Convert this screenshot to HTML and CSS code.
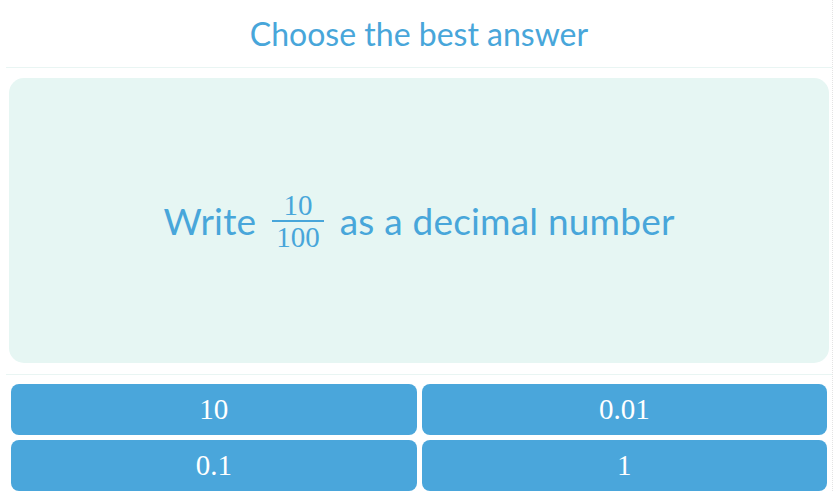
FILE: index.html
```html
<!DOCTYPE html>
<html lang="en">
<head>
    <meta charset="UTF-8">
    <meta name="viewport" content="width=device-width, initial-scale=1.0">
    <title>Quiz</title>
    <link rel="stylesheet" href="styles.css">
</head>
<body>
    <div class="page">
        <h2 class="title">Choose the best answer</h2>
        <div class="question-box">
            <p class="question">
                Write
                <span class="frac">
                    <span class="num">10</span>
                    <span class="den">100</span>
                </span>
                as a decimal number
            </p>
        </div>
        <div class="options">
            <button class="option">10</button>
            <button class="option">0.01</button>
            <button class="option">0.1</button>
            <button class="option">1</button>
        </div>
    </div>
</body>
</html>
```

FILE: styles.css
```css
body {
    margin: 0;
    background: #ffffff;
    font-family: Lato, "Open Sans", sans-serif;
}

.page {
    width: 826px;
    margin-left: 6px;
    border-right: 1px dotted #e4e4e4;
}

.title {
    margin: 0;
    height: 67px;
    line-height: 68px;
    text-align: center;
    font-size: 32px;
    font-weight: normal;
    color: #48a6da;
    border-bottom: 1px solid #e9f5f3;
}

.question-box {
    margin: 10px 3px 0 3px;
    height: 285px;
    background-color: #e6f6f3;
    border-radius: 15px;
    display: flex;
    justify-content: center;
    align-items: center;
}

.question {
    margin: 0;
    font-size: 37px;
    color: #48a6da;
    display: flex;
    align-items: center;
    gap: 14px;
    letter-spacing: 0.2px;
}

.frac {
    display: inline-flex;
    flex-direction: column;
    align-items: center;
    font-family: "Liberation Serif", serif;
    font-size: 29px;
    line-height: 26px;
    margin: 0 2px;
    letter-spacing: 0;
}

.num {
    padding: 0 6px 2px 6px;
}

.den {
    border-top: 2px solid #48a6da;
    padding: 2px 4px 0 4px;
}

.options {
    margin-top: 11px;
    border-top: 1px solid #e9f5f3;
    padding: 9px 5px 0 5px;
    display: grid;
    grid-template-columns: 1fr 1fr;
    gap: 5px;
}

.option {
    height: 51px;
    border: none;
    border-radius: 8px;
    background: #4aa6db;
    color: #ffffff;
    font-family: "Liberation Serif", serif;
    font-size: 29px;
    cursor: pointer;
    padding: 0;
}
```
